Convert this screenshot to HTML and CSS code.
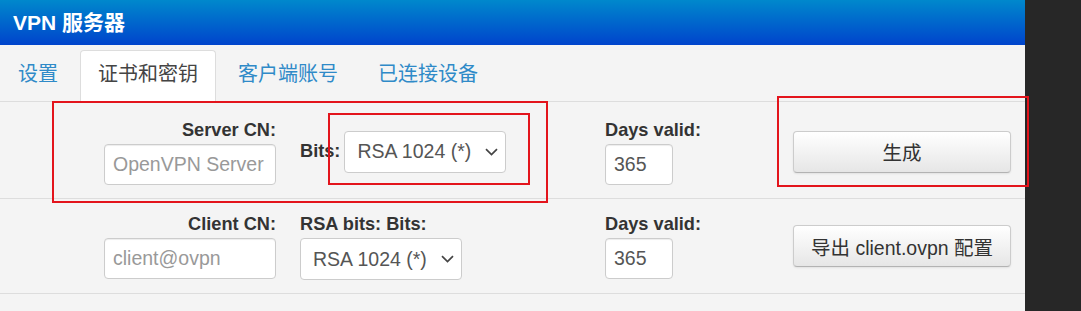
FILE: index.html
```html
<!DOCTYPE html>
<html lang="zh-CN">
<head>
<meta charset="utf-8">
<title>VPN 服务器</title>
<link rel="stylesheet" href="styles.css">
</head>
<body>
<div class="page">
  <main class="main">
    <header class="header"><h1 class="title">VPN 服务器</h1></header>
    <nav class="tabs">
      <a class="tab">设置</a>
      <a class="tab active">证书和密钥</a>
      <a class="tab">客户端账号</a>
      <a class="tab">已连接设备</a>
    </nav>
    <section class="row row-server">
      <div class="field cn">
        <label class="lbl">Server CN:</label>
        <input class="inp inp-cn" type="text" placeholder="OpenVPN Server">
      </div>
      <div class="field bits inline">
        <label class="lbl">Bits:</label>
        <div class="select"><span>RSA 1024 (*)</span><svg class="chev" width="13" height="8" viewBox="0 0 13 8"><path d="M1 1.2 L6.5 6.6 L12 1.2" fill="none" stroke="#444" stroke-width="1.7"/></svg></div>
      </div>
      <div class="field days">
        <label class="lbl">Days valid:</label>
        <input class="inp inp-days" type="text" value="365">
      </div>
      <div class="field action">
        <button class="btn">生成</button>
      </div>
    </section>
    <section class="row row-client">
      <div class="field cn">
        <label class="lbl">Client CN:</label>
        <input class="inp inp-cn" type="text" placeholder="client@ovpn">
      </div>
      <div class="field bits">
        <label class="lbl">RSA bits: Bits:</label>
        <div class="select"><span>RSA 1024 (*)</span><svg class="chev" width="13" height="8" viewBox="0 0 13 8"><path d="M1 1.2 L6.5 6.6 L12 1.2" fill="none" stroke="#444" stroke-width="1.7"/></svg></div>
      </div>
      <div class="field days">
        <label class="lbl">Days valid:</label>
        <input class="inp inp-days" type="text" value="365">
      </div>
      <div class="field action">
        <button class="btn">导出 client.ovpn 配置</button>
      </div>
    </section>
  </main>
  <aside class="dark"></aside>
  <div class="mark mark-1"></div>
  <div class="mark mark-2"></div>
  <div class="mark mark-3"></div>
</div>
</body>
</html>
```
FILE: styles.css
```css
body {
  margin: 0;
  font-family: "Liberation Sans", "Noto Sans CJK SC", sans-serif;
  color: #333;
  background: #f4f4f4;
}

.page {
  position: relative;
  display: flex;
  width: 1081px;
  height: 311px;
  overflow: hidden;
}

.main {
  width: 1025px;
  background: #f4f4f4;
}

.dark {
  flex: 1;
  background: #272727;
}

.header {
  height: 45px;
  padding-left: 13px;
  background: linear-gradient(#0088cc, #0044cc);
}

.title {
  margin: 0;
  font-size: 21px;
  line-height: 45px;
  font-weight: bold;
  color: #fff;
}

.tabs {
  display: flex;
  padding-top: 5px;
  border-bottom: 1px solid #ddd;
}

.tab {
  font-size: 20px;
  line-height: 40px;
  padding: 3px 17px 8px;
  border: 1px solid transparent;
  border-bottom: 0;
  border-radius: 4px 4px 0 0;
  margin-right: 4px;
  margin-bottom: -1px;
  color: #2f8ac8;
}

.tab.active {
  background: #fff;
  border-color: #ddd;
  color: #444;
}

.row {
  display: grid;
  grid-template-columns: 172px 281px 164px 218px;
  column-gap: 24px;
  padding: 16px 0 13px 104px;
  border-bottom: 1px solid #ddd;
}

.row-client {
  padding-top: 13px;
}

.lbl {
  display: block;
  font-size: 18.2px;
  font-weight: bold;
  line-height: 25px;
  margin-bottom: 1px;
  color: #333;
  white-space: nowrap;
}

.cn .lbl {
  text-align: right;
}

.field.inline {
  display: flex;
  align-items: center;
  gap: 4px;
  align-self: center;
}

.field.inline .lbl {
  margin-bottom: 0;
}

.action {
  align-self: center;
}

.inp {
  display: block;
  box-sizing: border-box;
  height: 41px;
  padding: 0 8px;
  border: 1px solid #ccc;
  border-radius: 4px;
  background: #fff;
  box-shadow: inset 0 1px 1px rgba(0, 0, 0, 0.075);
  font: 19.5px "Liberation Sans", sans-serif;
  color: #555;
  outline: none;
}

.inp::placeholder {
  color: #999;
}

.inp-cn {
  width: 172px;
}

.inp-days {
  width: 68px;
}

.select {
  box-sizing: border-box;
  display: flex;
  align-items: center;
  width: 162px;
  height: 42px;
  padding: 0 7px 0 12px;
  border: 1px solid #ccc;
  border-radius: 4px;
  background: #fff;
  font-size: 19.5px;
  color: #555;
}

.chev {
  margin-left: auto;
}

.btn {
  box-sizing: border-box;
  width: 218px;
  height: 42px;
  padding: 0;
  border: 1px solid #ccc;
  border-bottom-color: #b3b3b3;
  border-radius: 4px;
  background: linear-gradient(#ffffff, #e6e6e6);
  box-shadow: inset 0 1px 0 rgba(255, 255, 255, 0.2), 0 1px 2px rgba(0, 0, 0, 0.08);
  font: 19.5px "Liberation Sans", "Noto Sans CJK SC", sans-serif;
  color: #333;
}

.mark {
  position: absolute;
  box-sizing: border-box;
  border: 2px solid #e3141c;
}

.mark-1 {
  left: 52px;
  top: 101px;
  width: 496px;
  height: 102px;
}

.mark-2 {
  left: 328px;
  top: 113px;
  width: 202px;
  height: 72px;
}

.mark-3 {
  left: 777px;
  top: 96px;
  width: 252px;
  height: 91px;
}
```
